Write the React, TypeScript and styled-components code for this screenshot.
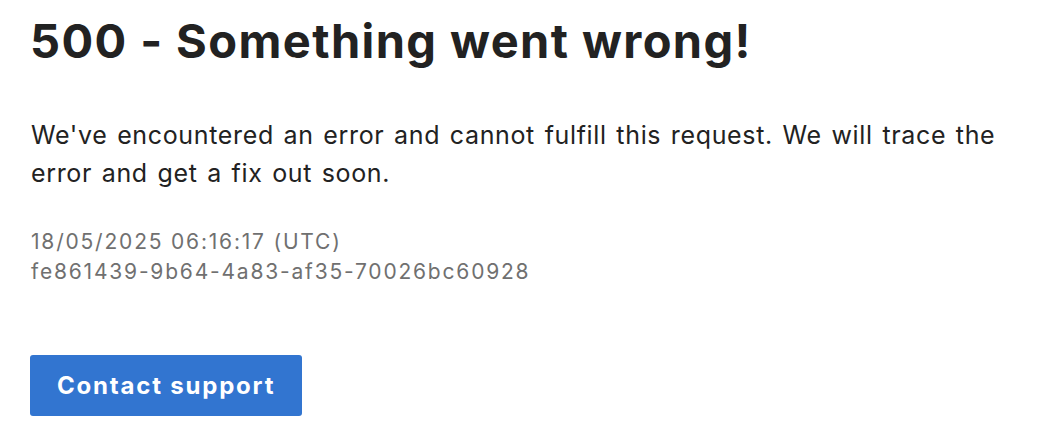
import React from "react";
import styled, { createGlobalStyle } from "styled-components";

const GlobalStyle = createGlobalStyle`
  body {
    margin: 0;
    background: #fff;
    font-family: Inter, "Liberation Sans", sans-serif;
    color: #222;
  }
`;

const Page = styled.main`
  padding: 13px 16px 13px 30px;
  display: flex;
  flex-direction: column;
  align-items: flex-start;
`;

const Title = styled.h1`
  margin: 0;
  font-size: 47px;
  font-weight: 700;
  letter-spacing: 1.4px;
  line-height: 56px;
  color: #222;
`;

const Message = styled.p`
  margin: 47px 0 0 1px;
  font-size: 25px;
  line-height: 38px;
  letter-spacing: 0.65px;
  word-spacing: 2px;
  color: #222;
`;

const Meta = styled.div`
  margin: 35px 0 0 1px;
  font-size: 21px;
  line-height: 30px;
  letter-spacing: 1.8px;
  color: #707070;
`;

const SupportButton = styled.button`
  margin-top: 68px;
  height: 61px;
  padding: 0 27px;
  border: none;
  border-radius: 3px;
  background: #3275d0;
  color: #fff;
  font-family: inherit;
  font-size: 24px;
  font-weight: 700;
  letter-spacing: 1.8px;
  cursor: pointer;
`;

export default function App() {
  return (
    <>
      <GlobalStyle />
      <Page>
        <Title>500 - Something went wrong!</Title>
        <Message>
          We've encountered an error and cannot fulfill this request. We will trace the error and
          get a fix out soon.
        </Message>
        <Meta>
          <div>18/05/2025 06:16:17 (UTC)</div>
          <div>fe861439-9b64-4a83-af35-70026bc60928</div>
        </Meta>
        <SupportButton>Contact support</SupportButton>
      </Page>
    </>
  );
}
